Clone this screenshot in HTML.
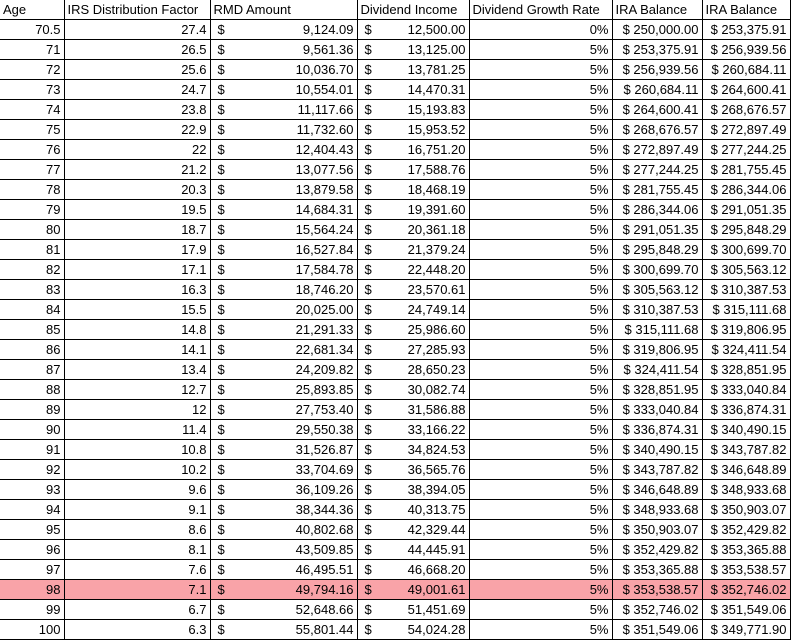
<!DOCTYPE html>
<html><head><meta charset="utf-8"><style>
body{margin:0;background:#fff;width:791px;height:641px;overflow:hidden}
table{border-collapse:collapse;table-layout:fixed;font-family:"Liberation Sans",sans-serif;font-size:13px;color:#000}
td{border:1px solid #000;height:19px;padding:0 3px;white-space:nowrap;overflow:hidden;text-align:right;line-height:19px}
tr td:first-child{border-left:none}
tr:first-child td{border-top:none;text-align:left}
td.d{text-align:right;position:relative}
td.d:before{content:"$";position:absolute;left:7px}
tr.h td{background:#f9a3a8}
</style></head><body>
<table>
<colgroup><col style="width:64px"><col style="width:146px"><col style="width:147px"><col style="width:112px"><col style="width:143px"><col style="width:90px"><col style="width:88px"></colgroup>
<tr><td>Age</td><td>IRS Distribution Factor</td><td>RMD Amount</td><td>Dividend Income</td><td>Dividend Growth Rate</td><td>IRA Balance</td><td>IRA Balance</td></tr>
<tr><td>70.5</td><td>27.4</td><td class="d">9,124.09</td><td class="d">12,500.00</td><td>0%</td><td>$ 250,000.00</td><td>$ 253,375.91</td></tr>
<tr><td>71</td><td>26.5</td><td class="d">9,561.36</td><td class="d">13,125.00</td><td>5%</td><td>$ 253,375.91</td><td>$ 256,939.56</td></tr>
<tr><td>72</td><td>25.6</td><td class="d">10,036.70</td><td class="d">13,781.25</td><td>5%</td><td>$ 256,939.56</td><td>$ 260,684.11</td></tr>
<tr><td>73</td><td>24.7</td><td class="d">10,554.01</td><td class="d">14,470.31</td><td>5%</td><td>$ 260,684.11</td><td>$ 264,600.41</td></tr>
<tr><td>74</td><td>23.8</td><td class="d">11,117.66</td><td class="d">15,193.83</td><td>5%</td><td>$ 264,600.41</td><td>$ 268,676.57</td></tr>
<tr><td>75</td><td>22.9</td><td class="d">11,732.60</td><td class="d">15,953.52</td><td>5%</td><td>$ 268,676.57</td><td>$ 272,897.49</td></tr>
<tr><td>76</td><td>22</td><td class="d">12,404.43</td><td class="d">16,751.20</td><td>5%</td><td>$ 272,897.49</td><td>$ 277,244.25</td></tr>
<tr><td>77</td><td>21.2</td><td class="d">13,077.56</td><td class="d">17,588.76</td><td>5%</td><td>$ 277,244.25</td><td>$ 281,755.45</td></tr>
<tr><td>78</td><td>20.3</td><td class="d">13,879.58</td><td class="d">18,468.19</td><td>5%</td><td>$ 281,755.45</td><td>$ 286,344.06</td></tr>
<tr><td>79</td><td>19.5</td><td class="d">14,684.31</td><td class="d">19,391.60</td><td>5%</td><td>$ 286,344.06</td><td>$ 291,051.35</td></tr>
<tr><td>80</td><td>18.7</td><td class="d">15,564.24</td><td class="d">20,361.18</td><td>5%</td><td>$ 291,051.35</td><td>$ 295,848.29</td></tr>
<tr><td>81</td><td>17.9</td><td class="d">16,527.84</td><td class="d">21,379.24</td><td>5%</td><td>$ 295,848.29</td><td>$ 300,699.70</td></tr>
<tr><td>82</td><td>17.1</td><td class="d">17,584.78</td><td class="d">22,448.20</td><td>5%</td><td>$ 300,699.70</td><td>$ 305,563.12</td></tr>
<tr><td>83</td><td>16.3</td><td class="d">18,746.20</td><td class="d">23,570.61</td><td>5%</td><td>$ 305,563.12</td><td>$ 310,387.53</td></tr>
<tr><td>84</td><td>15.5</td><td class="d">20,025.00</td><td class="d">24,749.14</td><td>5%</td><td>$ 310,387.53</td><td>$ 315,111.68</td></tr>
<tr><td>85</td><td>14.8</td><td class="d">21,291.33</td><td class="d">25,986.60</td><td>5%</td><td>$ 315,111.68</td><td>$ 319,806.95</td></tr>
<tr><td>86</td><td>14.1</td><td class="d">22,681.34</td><td class="d">27,285.93</td><td>5%</td><td>$ 319,806.95</td><td>$ 324,411.54</td></tr>
<tr><td>87</td><td>13.4</td><td class="d">24,209.82</td><td class="d">28,650.23</td><td>5%</td><td>$ 324,411.54</td><td>$ 328,851.95</td></tr>
<tr><td>88</td><td>12.7</td><td class="d">25,893.85</td><td class="d">30,082.74</td><td>5%</td><td>$ 328,851.95</td><td>$ 333,040.84</td></tr>
<tr><td>89</td><td>12</td><td class="d">27,753.40</td><td class="d">31,586.88</td><td>5%</td><td>$ 333,040.84</td><td>$ 336,874.31</td></tr>
<tr><td>90</td><td>11.4</td><td class="d">29,550.38</td><td class="d">33,166.22</td><td>5%</td><td>$ 336,874.31</td><td>$ 340,490.15</td></tr>
<tr><td>91</td><td>10.8</td><td class="d">31,526.87</td><td class="d">34,824.53</td><td>5%</td><td>$ 340,490.15</td><td>$ 343,787.82</td></tr>
<tr><td>92</td><td>10.2</td><td class="d">33,704.69</td><td class="d">36,565.76</td><td>5%</td><td>$ 343,787.82</td><td>$ 346,648.89</td></tr>
<tr><td>93</td><td>9.6</td><td class="d">36,109.26</td><td class="d">38,394.05</td><td>5%</td><td>$ 346,648.89</td><td>$ 348,933.68</td></tr>
<tr><td>94</td><td>9.1</td><td class="d">38,344.36</td><td class="d">40,313.75</td><td>5%</td><td>$ 348,933.68</td><td>$ 350,903.07</td></tr>
<tr><td>95</td><td>8.6</td><td class="d">40,802.68</td><td class="d">42,329.44</td><td>5%</td><td>$ 350,903.07</td><td>$ 352,429.82</td></tr>
<tr><td>96</td><td>8.1</td><td class="d">43,509.85</td><td class="d">44,445.91</td><td>5%</td><td>$ 352,429.82</td><td>$ 353,365.88</td></tr>
<tr><td>97</td><td>7.6</td><td class="d">46,495.51</td><td class="d">46,668.20</td><td>5%</td><td>$ 353,365.88</td><td>$ 353,538.57</td></tr>
<tr class="h"><td>98</td><td>7.1</td><td class="d">49,794.16</td><td class="d">49,001.61</td><td>5%</td><td>$ 353,538.57</td><td>$ 352,746.02</td></tr>
<tr><td>99</td><td>6.7</td><td class="d">52,648.66</td><td class="d">51,451.69</td><td>5%</td><td>$ 352,746.02</td><td>$ 351,549.06</td></tr>
<tr><td>100</td><td>6.3</td><td class="d">55,801.44</td><td class="d">54,024.28</td><td>5%</td><td>$ 351,549.06</td><td>$ 349,771.90</td></tr>
</table>
</body></html>
